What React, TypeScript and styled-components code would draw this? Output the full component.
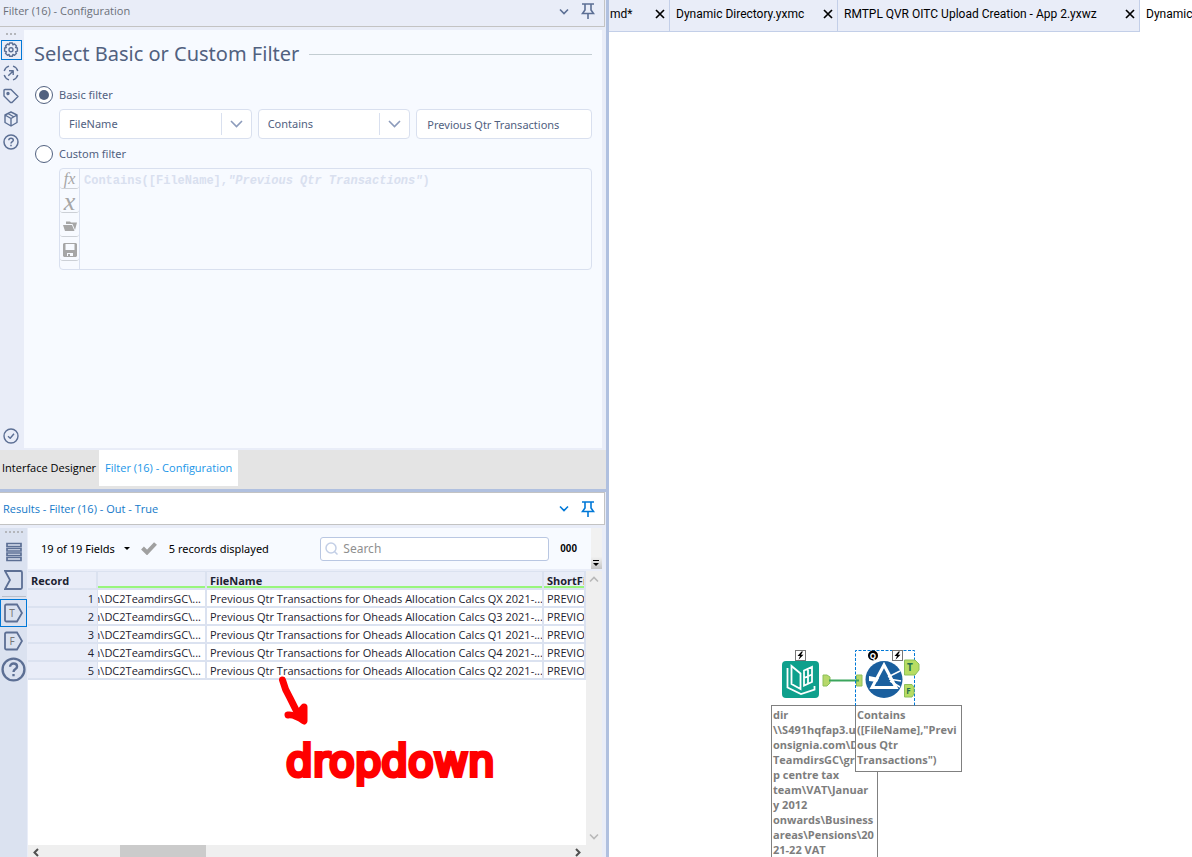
import React from "react";
import styled, { createGlobalStyle, css } from "styled-components";

const GlobalStyle = createGlobalStyle`
  *, *::before, *::after { box-sizing: border-box; }
  body { margin: 0; background: #fff; }
  body, button, input, select, textarea {
    font-family: "Noto Sans", "Open Sans", sans-serif;
    font-size: 11px;
    line-height: 16px;
  }
  button { border: 0; padding: 0; background: none; color: inherit; }
  svg { display: block; flex: none; }
`;

const compactFont = `"Open Sans", "Noto Sans", sans-serif`;

const palette = {
  ink: "#51617f",
  icon: "#5c6f94",
  bar: "#e9edf8",
  rail: "#dbe2f0",
  pane: "#f7faff",
  line: "#d9e0ef",
  split: "#b0c0df",
  blue: "#0078d7",
};

/* ---------- shell ---------- */

const Shell = styled.div`
  display: grid;
  grid-template-columns: minmax(0, 606fr) 3px minmax(0, 583fr);
  height: 100vh;
  overflow: hidden;
`;

const Divider = styled.div`
  background: ${palette.split};
`;

const Dock = styled.div`
  display: grid;
  grid-template-rows: minmax(0, 489fr) 3px minmax(0, 365fr);
  min-width: 0;
  background: ${palette.bar};
`;

const Panel = styled.section`
  display: flex;
  flex-direction: column;
  min-height: 0;
  min-width: 0;
`;

const PanelHeader = styled.header<{ $active?: boolean }>`
  display: flex;
  align-items: center;
  gap: 12px;
  height: ${(p) => (p.$active ? 33 : 27)}px;
  padding: ${(p) => (p.$active ? "0 9px 0 3px" : "0 9px 4px 3px")};
  margin-right: 1px;
  border: 1px solid #c3c3c3;
  border-left: 0;
  ${(p) => !p.$active && "border-top: 0;"}
  background: ${(p) => (p.$active ? "#fff" : palette.bar)};
  color: ${(p) => (p.$active ? "#1479c9" : "#6b7078")};
`;

const PanelTitle = styled.h2`
  flex: 1;
  margin: 0;
  font-family: ${compactFont};
  font-size: 11px;
  font-weight: 400;
`;

const HeaderButton = styled.button<{ $active?: boolean }>`
  color: ${(p) => (p.$active ? palette.blue : palette.icon)};
`;

/* ---------- configuration ---------- */

const ConfigBody = styled.div`
  display: flex;
  flex: 1;
  min-height: 0;
  margin: 3px 4px 2px 0;
  background: ${palette.pane};
`;

const ConfigRail = styled.nav`
  display: flex;
  flex-direction: column;
  align-items: center;
  gap: 3px;
  width: 24px;
  padding: 3px 2px 2px 0;
  background: ${palette.bar};
  color: ${palette.icon};
`;

const Grip = styled.div<{ $wide?: boolean }>`
  width: ${(p) => (p.$wide ? 18 : 10)}px;
  height: 2px;
  margin-bottom: ${(p) => (p.$wide ? 5 : 2)}px;
  background: repeating-linear-gradient(90deg, #b4b6bb 0 2px, transparent 2px 4px);
`;

const ConfigRailButton = styled.button<{ $selected?: boolean; $last?: boolean }>`
  display: grid;
  place-items: center;
  width: 21px;
  height: 20px;
  border: 1px solid ${(p) => (p.$selected ? palette.blue : "transparent")};
  ${(p) => p.$last && "margin-top: auto;"}
`;

const Form = styled.form`
  flex: 1;
  min-width: 0;
  padding: 8px 10px 0;
  color: ${palette.ink};
`;

const FormTitle = styled.h1`
  display: flex;
  align-items: center;
  gap: 10px;
  margin: 0 0 15px;
  font-size: 20px;
  line-height: 32px;
  font-weight: 400;

  &::after {
    content: "";
    flex: 1;
    height: 1px;
    background: #c3cdd2;
  }
`;

const Choice = styled.label`
  display: flex;
  align-items: center;
  gap: 5px;
  height: 20px;
`;

const Radio = styled.input`
  appearance: none;
  display: grid;
  place-items: center;
  width: 18px;
  height: 18px;
  margin: 0 1px;
  border: 1px solid ${palette.ink};
  border-radius: 50%;
  background: #fff;

  &:checked::before {
    content: "";
    width: 10px;
    height: 10px;
    border-radius: 50%;
    background: ${palette.ink};
  }
`;

const Criteria = styled.div`
  display: flex;
  gap: 6px;
  margin: 4px 0 5px 25px;
`;

const field = css`
  width: 100%;
  height: 30px;
  padding: 0 10px;
  border: 1px solid ${palette.line};
  border-radius: 4px;
  background: #fff;
  color: ${palette.ink};
`;

const FieldSlot = styled.div<{ $grow: number }>`
  position: relative;
  flex: ${(p) => p.$grow} 1 0;
  min-width: 0;
`;

const Dropdown = styled.select`
  ${field}
  appearance: none;
  padding-left: 9px;
`;

const DropdownArrow = styled.span`
  position: absolute;
  top: 4px;
  right: 1px;
  display: grid;
  place-items: center;
  width: 30px;
  height: 22px;
  border-left: 1px solid ${palette.line};
  color: #8c9bbb;
  pointer-events: none;
`;

const TextField = styled.input`
  ${field}
`;

const Expression = styled.div`
  display: flex;
  height: 102px;
  margin: 4px 0 0 25px;
  border: 1px solid ${palette.line};
  border-radius: 4px;
`;

const ExpressionTools = styled.div`
  width: 20px;
  border-right: 1px solid ${palette.line};
`;

const ExpressionTool = styled.button<{ $short?: boolean }>`
  display: grid;
  place-items: center;
  width: 100%;
  height: ${(p) => (p.$short ? 20 : 24)}px;
  padding-top: ${(p) => (p.$short ? 0 : 3)}px;
  border-bottom: 1px solid #ccd0d6;
  border-radius: 0 0 3px 3px;
  color: #a6a6a6;
  font-family: "Liberation Serif", serif;
  font-style: italic;
  font-size: ${(p) => (p.$short ? 16 : 26)}px;
`;

const Code = styled.code`
  padding: 4px;
  font-family: "Liberation Mono", monospace;
  font-size: 12px;
  font-weight: 700;
  color: ${palette.line};
`;

const DockTabs = styled.div`
  display: flex;
  height: 39px;
  padding-bottom: 3px;
  background: #e4e4e4;
`;

const DockTab = styled.button<{ $active?: boolean }>`
  padding: 0 ${(p) => (p.$active ? "6px" : "3px 0 2px")};
  background: ${(p) => (p.$active ? "#fff" : "transparent")};
  color: ${(p) => (p.$active ? "#2196e8" : "#000")};
  font-family: ${compactFont};
`;

/* ---------- results ---------- */

const ResultsBody = styled.div`
  display: flex;
  flex: 1;
  min-height: 0;
  margin: 3px 4px 0 0;
`;

const ResultsRail = styled.nav`
  display: flex;
  flex-direction: column;
  align-items: center;
  width: 27px;
  padding-top: 3px;
  background: ${palette.rail};
  color: ${palette.icon};
`;

const ResultsRailButton = styled.button<{ $selected?: boolean }>`
  display: grid;
  place-items: center;
  width: 27px;
  height: 28px;
  border: 1px solid ${(p) => (p.$selected ? palette.blue : "transparent")};
`;

const RailRule = styled.hr`
  width: 24px;
  margin: 2px 0;
  border: 0;
  border-top: 1px solid #b9bec8;
`;

const ResultsMain = styled.div`
  display: flex;
  flex: 1;
  flex-direction: column;
  min-width: 0;
  padding-left: 1px;
`;

const Toolbar = styled.div`
  display: flex;
  align-items: stretch;
  height: 43px;
  border-bottom: 2px solid ${palette.bar};
  background: ${palette.pane};
`;

const ToolbarItems = styled.div`
  display: flex;
  flex: 1;
  align-items: center;
  min-width: 0;
  padding: 0 14px 0 13px;
`;

const FieldsButton = styled.button`
  display: flex;
  align-items: center;
  gap: 9px;
  margin-right: 11px;
`;

const RecordCount = styled.span`
  margin: 0 auto 0 12px;
`;

const SearchBox = styled.label`
  display: flex;
  align-items: center;
  gap: 5px;
  width: 229px;
  height: 24px;
  margin-right: 11px;
  padding: 0 4px;
  border: 1px solid #b9c7e2;
  border-radius: 3px;
  background: #fff;
  color: #c3cfe6;
`;

const SearchInput = styled.input`
  flex: 1;
  min-width: 0;
  padding: 0;
  border: 0;
  outline: 0;
  background: none;
  font-size: 12px;

  &::placeholder { color: #8f8f8f; opacity: 1; }
`;

const MoreButton = styled.button`
  font-family: "Liberation Sans", sans-serif;
  font-size: 10px;
  font-weight: 700;
`;

const Overflow = styled.button`
  display: flex;
  align-items: flex-end;
  width: 11px;
  background: linear-gradient(#f1f1f1 70%, #c4c4c4);
`;

const GridArea = styled.div`
  display: grid;
  grid-template-columns: minmax(0, 1fr) 16px;
  grid-template-rows: minmax(0, 1fr) 12px;
  flex: 1;
  min-height: 0;
  background: #fff;
`;

const TableClip = styled.div`
  overflow: hidden;
`;

const Table = styled.table`
  width: 100%;
  table-layout: fixed;
  border-collapse: separate;
  border-spacing: 0;
  color: #1c2230;
`;

const cell = css`
  height: 18px;
  padding: 1px 4px 0 3px;
  border-right: 2px solid ${palette.rail};
  border-bottom: 2px solid ${palette.rail};
  font-family: ${compactFont};
  font-size: 11px;
  line-height: 15px;
  white-space: nowrap;
  overflow: hidden;
`;

const HeadCell = styled.th<{ $marked?: boolean }>`
  ${cell}
  height: 19px;
  padding-top: 0;
  border-top: 1px solid ${palette.rail};
  background: ${palette.bar};
  text-align: left;
  ${(p) => p.$marked && "box-shadow: inset 0 -2px #98f57c;"}
`;

const NumberCell = styled.th`
  ${cell}
  padding-right: 3px;
  border-right-width: 1px;
  background: ${palette.bar};
  font-weight: 400;
  text-align: right;
`;

const Cell = styled.td`
  ${cell}
`;

const TailCell = styled(Cell)`
  padding-left: 0;
`;

const TailText = styled.div`
  display: flex;
  justify-content: flex-end;
  overflow: hidden;
`;

const VerticalBar = styled.div`
  display: flex;
  flex-direction: column;
  justify-content: space-between;
  align-items: center;
  padding: 5px 0;
  background: #efefef;
  color: #b8b8b8;
`;

const HorizontalBar = styled.div`
  display: flex;
  grid-column: 1 / -1;
  justify-content: space-between;
  padding: 0 20px 0 4px;
  background: #efefef;
  color: #505050;
`;

const ScrollTrack = styled.div`
  flex: 1;
`;

const ScrollThumb = styled.div`
  width: 16%;
  height: 100%;
  margin-left: 15%;
  background: #cbcbcb;
`;

const Note = styled.div`
  position: absolute;
  top: 676px;
  left: 276px;
  color: #f00;
`;

const NoteText = styled.p`
  margin: 8px 0 0 10px;
  font-family: "DejaVu Sans", sans-serif;
  font-size: 42px;
  line-height: 56px;
  -webkit-text-stroke: 4px #f00;
  stroke-linejoin: round;
`;

/* ---------- workflow canvas ---------- */

const Workspace = styled.main`
  display: flex;
  flex-direction: column;
  min-width: 0;
`;

const FileTabs = styled.div`
  display: flex;
  height: 32px;
  overflow: hidden;
`;

const FileTab = styled.div<{ $width: number; $active?: boolean }>`
  display: flex;
  flex: none;
  align-items: center;
  justify-content: space-between;
  width: ${(p) => p.$width}px;
  padding: 0 4px 4px 6px;
  border: solid #c3cfe8;
  border-width: ${(p) => (p.$active ? "0" : "0 1px 1px 0")};
  background: ${(p) => (p.$active ? "#fff" : palette.bar)};
  font-family: Roboto, "Noto Sans", sans-serif;
  font-size: 12px;
  white-space: nowrap;
  &:first-child { padding-left: 1px; }
`;

const Canvas = styled.div`
  position: relative;
  flex: 1;
  overflow: hidden;
  background: #fff;
`;

const Diagram = styled.svg`
  position: absolute;
  left: 162px;
  top: 617px;
`;

const Annotation = styled.p<{ $left: number; $height: number }>`
  position: absolute;
  left: ${(p) => p.$left}px;
  top: 673px;
  width: 107px;
  height: ${(p) => p.$height}px;
  margin: 0;
  padding: 1px;
  border: 1px solid #808080;
  background: #fff;
  color: #7d7d7d;
  font-family: ${compactFont};
  font-size: 11px;
  line-height: 15px;
  font-weight: 700;
  white-space: pre;
  overflow: hidden;
`;

/* ---------- icons ---------- */

const Glyph = ({ size = 16, children, w = 1.4 }: { size?: number; w?: number; children: React.ReactNode }) => (
  <svg width={size} height={size} viewBox="0 0 16 16" fill="none" stroke="currentColor" strokeWidth={w} strokeLinejoin="round">
    {children}
  </svg>
);

const Chevron = ({ width = 10, d = "M1 1.5 5 5.5 9 1.5" }) => (
  <svg width={width} height={width === 10 ? 7 : 8} viewBox={width === 10 ? "0 0 10 7" : "0 0 13 8"} fill="none" stroke="currentColor" strokeWidth="1.6">
    <path d={d} />
  </svg>
);

const PinIcon = () => (
  <svg width="14" height="16" viewBox="0 0 14 16" fill="none" stroke="currentColor" strokeWidth="1.6">
    <path d="M1 1H13M4 1V7L1.5 10.5H12.5L10 7V1M7 10.5V16" />
  </svg>
);

const GearIcon = () => (
  <Glyph>
    <path d="M6.6 1h2.8l.5 1.8 1.6-.9 2 2-.9 1.6 1.8.5v3.2l-1.8.5.9 1.6-2 2-1.6-.9-.5 1.8H6.6l-.5-1.8-1.6.9-2-2 .9-1.6L1.6 9.200V6l1.800-.5-.9-1.600 2-2 1.600.9z" />
    <circle cx="8" cy="7.700" r="2" />
  </Glyph>
);

const TargetIcon = () => (
  <Glyph>
    <path d="M6 1.200A7 7 0 0 0 1.200 6M10 1.200A7 7 0 0 1 14.800 6M14.800 10A7 7 0 0 1 10 14.800M6 14.800A7 7 0 0 1 1.200 10M5.300 10.700 9.600 6.400M6 5.800H10.200V10" />
  </Glyph>
);

const TagIcon = () => (
  <Glyph>
    <path d="M1 2.500Q1 1.500 2 1.500L8 1.500 15 8.500 9 14.500 7.500 14.500 1 8Z" />
    <circle cx="5" cy="5.500" r="1" fill="currentColor" />
  </Glyph>
);

const BoxIcon = () => (
  <Glyph>
    <path d="M8 1 14 4V11.500L8 15 2 11.500V4ZM2 4 8 7.500 14 4M8 7.500V15M5 2.500 11 6" />
  </Glyph>
);

const HelpIcon = ({ size = 16 }) => (
  <Glyph size={size} w={1.500}>
    <circle cx="8" cy="8" r="7" />
    <path d="M5.800 6.300C5.800 3.400 10.300 3.600 10.300 6.200 10.300 7.800 8 7.600 8 9.600M8 10.800V12.300" />
  </Glyph>
);

const CheckCircleIcon = () => (
  <Glyph>
    <circle cx="8" cy="8" r="7" />
    <path d="M5 8.300 7.200 10.300 11 5.800" />
  </Glyph>
);

const OutputIcon = ({ letter }: { letter: string }) => (
  <svg width="19" height="20" viewBox="0 0 19 20">
    <path d="M2.500 1.500H13L18 10 13 18.500H2.500Q1 18.500 1 17V3Q1 1.500 2.500 1.500Z" fill="none" stroke="currentColor" strokeWidth="1.800" />
    <text x="8" y="13.500" textAnchor="middle" fontSize="10" fill="#777">{letter}</text>
  </svg>
);

const Bolt = ({ x }: { x: number }) => (
  <g transform={`translate(${x} 1)`}>
    <rect x="0.500" y="0.500" width="10" height="10" fill="#fff" stroke="#777" />
    <path d="M6.500 1.500 2.500 6H5L3.500 9.800 8.500 4.800H6L8 1.500Z" fill="#000" />
  </g>
);

const CloseIcon = () => (
  <svg width="10" height="10" viewBox="0 0 10 10" stroke="#000" strokeWidth="1.700">
    <path d="M1 1 9 9M9 1 1 9" />
  </svg>
);

const records = ["QX", "Q3", "Q1", "Q4", "Q2"];

const files = [
  { name: "md*", width: 61 },
  { name: "Dynamic Directory.yxmc", width: 168 },
  { name: "RMTPL QVR OITC Upload Creation - App 2.yxwz", width: 302 },
];

function HeaderActions({ active }: { active?: boolean }) {
  return (
    <>
      <HeaderButton $active={active} aria-label="Panel menu"><Chevron /></HeaderButton>
      <HeaderButton $active={active} aria-label="Pin panel"><PinIcon /></HeaderButton>
    </>
  );
}

function Configuration() {
  return (
    <Panel>
      <PanelHeader>
        <PanelTitle>Filter (16) - Configuration</PanelTitle>
        <HeaderActions />
      </PanelHeader>
      <ConfigBody>
        <ConfigRail>
          <Grip />
          <ConfigRailButton $selected aria-label="Configuration"><GearIcon /></ConfigRailButton>
          <ConfigRailButton aria-label="Navigation"><TargetIcon /></ConfigRailButton>
          <ConfigRailButton aria-label="Annotation"><TagIcon /></ConfigRailButton>
          <ConfigRailButton aria-label="Metadata"><BoxIcon /></ConfigRailButton>
          <ConfigRailButton aria-label="Help"><HelpIcon /></ConfigRailButton>
          <ConfigRailButton $last aria-label="Apply"><CheckCircleIcon /></ConfigRailButton>
        </ConfigRail>
        <Form onSubmit={(e) => e.preventDefault()}>
          <FormTitle>Select Basic or Custom Filter</FormTitle>
          <Choice><Radio type="radio" name="mode" defaultChecked />Basic filter</Choice>
          <Criteria>
            <FieldSlot $grow={193}>
              <Dropdown aria-label="Field"><option>FileName</option></Dropdown>
              <DropdownArrow><Chevron width={13} d="M1 1 6.500 6.500 12 1" /></DropdownArrow>
            </FieldSlot>
            <FieldSlot $grow={153}>
              <Dropdown aria-label="Operator"><option>Contains</option></Dropdown>
              <DropdownArrow><Chevron width={13} d="M1 1 6.500 6.500 12 1" /></DropdownArrow>
            </FieldSlot>
            <FieldSlot $grow={176}>
              <TextField aria-label="Value" defaultValue="Previous Qtr Transactions" />
            </FieldSlot>
          </Criteria>
          <Choice><Radio type="radio" name="mode" />Custom filter</Choice>
          <Expression>
            <ExpressionTools>
              <ExpressionTool type="button" $short>fx</ExpressionTool>
              <ExpressionTool type="button">x</ExpressionTool>
              <ExpressionTool type="button" aria-label="Open expression">
                <svg width="14" height="12" viewBox="0 0 14 12" fill="currentColor">
                  <path d="M3 3V1.500H7L8 2.500H14L12 10 9.500 4H3ZM0 5H9L11.500 11H2Z" />
                </svg>
              </ExpressionTool>
              <ExpressionTool type="button" aria-label="Save expression">
                <svg width="14" height="14" viewBox="0 0 14 14" fill="currentColor" fillRule="evenodd">
                  <path d="M1 0H13L14 1V13L13 14H1L0 13V1ZM2.500 1V7H11.500V1ZM4 10V13H10V10ZM5 11H7V13H5Z" />
                </svg>
              </ExpressionTool>
            </ExpressionTools>
            <Code>Contains([FileName],<em>"Previous Qtr Transactions"</em>)</Code>
          </Expression>
        </Form>
      </ConfigBody>
      <DockTabs>
        <DockTab>Interface Designer</DockTab>
        <DockTab $active>Filter (16) - Configuration</DockTab>
      </DockTabs>
    </Panel>
  );
}

function Results() {
  return (
    <Panel>
      <PanelHeader $active>
        <PanelTitle>Results - Filter (16) - Out - True</PanelTitle>
        <HeaderActions active />
      </PanelHeader>
      <ResultsBody>
        <ResultsRail>
          <Grip $wide />
          <ResultsRailButton aria-label="Messages">
            <svg width="16" height="20" viewBox="0 0 16 20" fill="none" stroke="currentColor" strokeWidth="1.700">
              <path d="M1 1.500H15V4.500H1ZM1 6.500H15V9H1ZM1 11H15V13.500H1ZM1 15.500H15V18.500H1Z" />
            </svg>
          </ResultsRailButton>
          <ResultsRailButton aria-label="Input">
            <svg width="19" height="20" viewBox="0 0 19 20" fill="none" stroke="currentColor" strokeWidth="1.800">
              <path d="M1 1H16.500Q18 1 18 2.500V17.500Q18 19 16.500 19H1L6 10Z" />
            </svg>
          </ResultsRailButton>
          <RailRule />
          <ResultsRailButton $selected aria-label="True output"><OutputIcon letter="T" /></ResultsRailButton>
          <ResultsRailButton aria-label="False output"><OutputIcon letter="F" /></ResultsRailButton>
          <ResultsRailButton aria-label="Help"><HelpIcon size={25} /></ResultsRailButton>
        </ResultsRail>
        <ResultsMain>
          <Toolbar>
            <ToolbarItems>
              <FieldsButton>
                19 of 19 Fields
                <svg width="6" height="3" viewBox="0 0 6 3"><path d="M0 0H6L3 3Z" /></svg>
              </FieldsButton>
              <svg width="16" height="13" viewBox="0 0 16 13" fill="none" stroke="#a0a0a0" strokeWidth="4">
                <path d="M1.500 6 6 10.500 14.500 1.500" />
              </svg>
              <RecordCount>5 records displayed</RecordCount>
              <SearchBox>
                <svg width="13" height="13" viewBox="0 0 13 13" fill="none" stroke="currentColor" strokeWidth="1.500">
                  <circle cx="6" cy="6" r="5" /><path d="M9.500 9.500 12.500 12.500" />
                </svg>
                <SearchInput placeholder="Search" aria-label="Search" />
              </SearchBox>
              <MoreButton>000</MoreButton>
            </ToolbarItems>
            <Overflow aria-label="Toolbar options">
              <svg width="10" height="10" viewBox="0 0 10 10"><path d="M2 1H8V2H2ZM2 4H8L5 7Z" /></svg>
            </Overflow>
          </Toolbar>
          <GridArea>
            <TableClip>
              <Table>
                <colgroup>
                  <col style={{ width: 70 }} />
                  <col style={{ width: 109 }} />
                  <col style={{ width: 337 }} />
                  <col />
                </colgroup>
                <thead>
                  <tr>
                    <HeadCell scope="col">Record</HeadCell>
                    <HeadCell scope="col" $marked aria-label="Directory" />
                    <HeadCell scope="col" $marked>FileName</HeadCell>
                    <HeadCell scope="col" $marked>ShortFileName</HeadCell>
                  </tr>
                </thead>
                <tbody>
                  {records.map((quarter, i) => (
                    <tr key={quarter}>
                      <NumberCell scope="row">{i + 1}</NumberCell>
                      <TailCell><TailText>n\DC2TeamdirsGC\...</TailText></TailCell>
                      <Cell>Previous Qtr Transactions for Oheads Allocation Calcs {quarter} 2021-...</Cell>
                      <Cell>PREVIO</Cell>
                    </tr>
                  ))}
                </tbody>
              </Table>
            </TableClip>
            <VerticalBar>
              <Chevron d="M1 5.500 5 1.500 9 5.500" />
              <Chevron />
            </VerticalBar>
            <HorizontalBar>
              <svg width="8" height="13" viewBox="0 0 8 13" fill="none" stroke="currentColor" strokeWidth="2"><path d="M6 4 2.500 7.500 6 11" /></svg>
              <ScrollTrack><ScrollThumb /></ScrollTrack>
              <svg width="8" height="13" viewBox="0 0 8 13" fill="none" stroke="currentColor" strokeWidth="2"><path d="M2 4 5.500 7.500 2 11" /></svg>
            </HorizontalBar>
          </GridArea>
        </ResultsMain>
      </ResultsBody>
    </Panel>
  );
}

function Workflow() {
  return (
    <Workspace>
      <FileTabs>
        {files.map((file) => (
          <FileTab key={file.name} $width={file.width}>
            {file.name}
            <button aria-label={`Close ${file.name}`}><CloseIcon /></button>
          </FileTab>
        ))}
        <FileTab $active $width={160}>Dynamic Input</FileTab>
      </FileTabs>
      <Canvas>
        <Annotation $left={162} $height={200}>
          {"dir\n\\\\S491hqfap3.uk.c\nonsignia.com\\DC2\nTeamdirsGC\\grou\np centre tax\nteam\\VAT\\Januar\ny 2012\nonwards\\Business\nareas\\Pensions\\20\n21-22 VAT"}
        </Annotation>
        <Annotation $left={246} $height={67}>
          {'Contains\n([FileName],"Previ\nous Qtr\nTransactions")'}
        </Annotation>
        <Diagram width="150" height="57" viewBox="0 0 150 57">
          <Bolt x={24} />
          <rect x="11" y="12" width="37" height="37" rx="4" fill="#0fa08c" />
          <path d="M16.500 19V38.500L30 45 43.500 40.500V37M20.500 17V35L29.500 40V24.500ZM33 21.500 41 18V33L33 36.500ZM37 20V35M33 29 41 25.500" fill="none" stroke="#fff" strokeWidth="1.800" />
          <path d="M52 26H56L59 28V34L56 37H52Z" fill="#b7d86b" stroke="#8cc05a" />
          <path d="M85.500 26H91V37H85.500Z" fill="#b7d86b" stroke="#8cc05a" />
          <path d="M58 31.500H88" stroke="#3ba55d" strokeWidth="2" />
          <path d="M84.500 57V1.500H143.500V57" fill="none" stroke={palette.blue} strokeDasharray="3 1.500" />
          <circle cx="102" cy="6.500" r="5" fill="#000" />
          <text x="102" y="9.500" textAnchor="middle" fontSize="8" fontWeight="700" fill="#fff">Q</text>
          <Bolt x={121} />
          <circle cx="113" cy="30.500" r="18.500" fill="#1a5f9e" />
          <path d="M113 16 125 38.500H101Z" fill="none" stroke="#fff" strokeWidth="3" />
          <path d="M98 27 108 29 106 33 98 32Z" fill="#fff" />
          <path d="M117 28 129 22M118 30 130 32M119 32 129 38" stroke="#fff" strokeWidth="1.500" />
          <path d="M133.500 11H144L148 15V21L144 26H133.500Z" fill="#b7dd63" stroke="#8cc05a" />
          <text x="139" y="22" textAnchor="middle" fontSize="10" fontWeight="700" fill="#23704f">T</text>
          <path d="M133.500 35.500H141L143 38V45L141 48H133.500Z" fill="#b7dd63" stroke="#8cc05a" />
          <text x="137.500" y="45" textAnchor="middle" fontSize="8" fontWeight="700" fill="#23704f">F</text>
        </Diagram>
      </Canvas>
    </Workspace>
  );
}

export default function App() {
  return (
    <>
      <GlobalStyle />
      <Shell>
        <Dock>
          <Configuration />
          <Divider />
          <Results />
        </Dock>
        <Divider />
        <Workflow />
      </Shell>
      <Note>
        <svg width="32" height="50" viewBox="0 0 32 50" fill="none" stroke="currentColor" strokeLinecap="round" strokeLinejoin="round">
          <path d="M6.500 4Q9 14 14 22L23 40" strokeWidth="7" />
          <path d="M12 39Q18 38 28 45V31L22 38" strokeWidth="7" />
        </svg>
        <NoteText>dropdown</NoteText>
      </Note>
    </>
  );
}
